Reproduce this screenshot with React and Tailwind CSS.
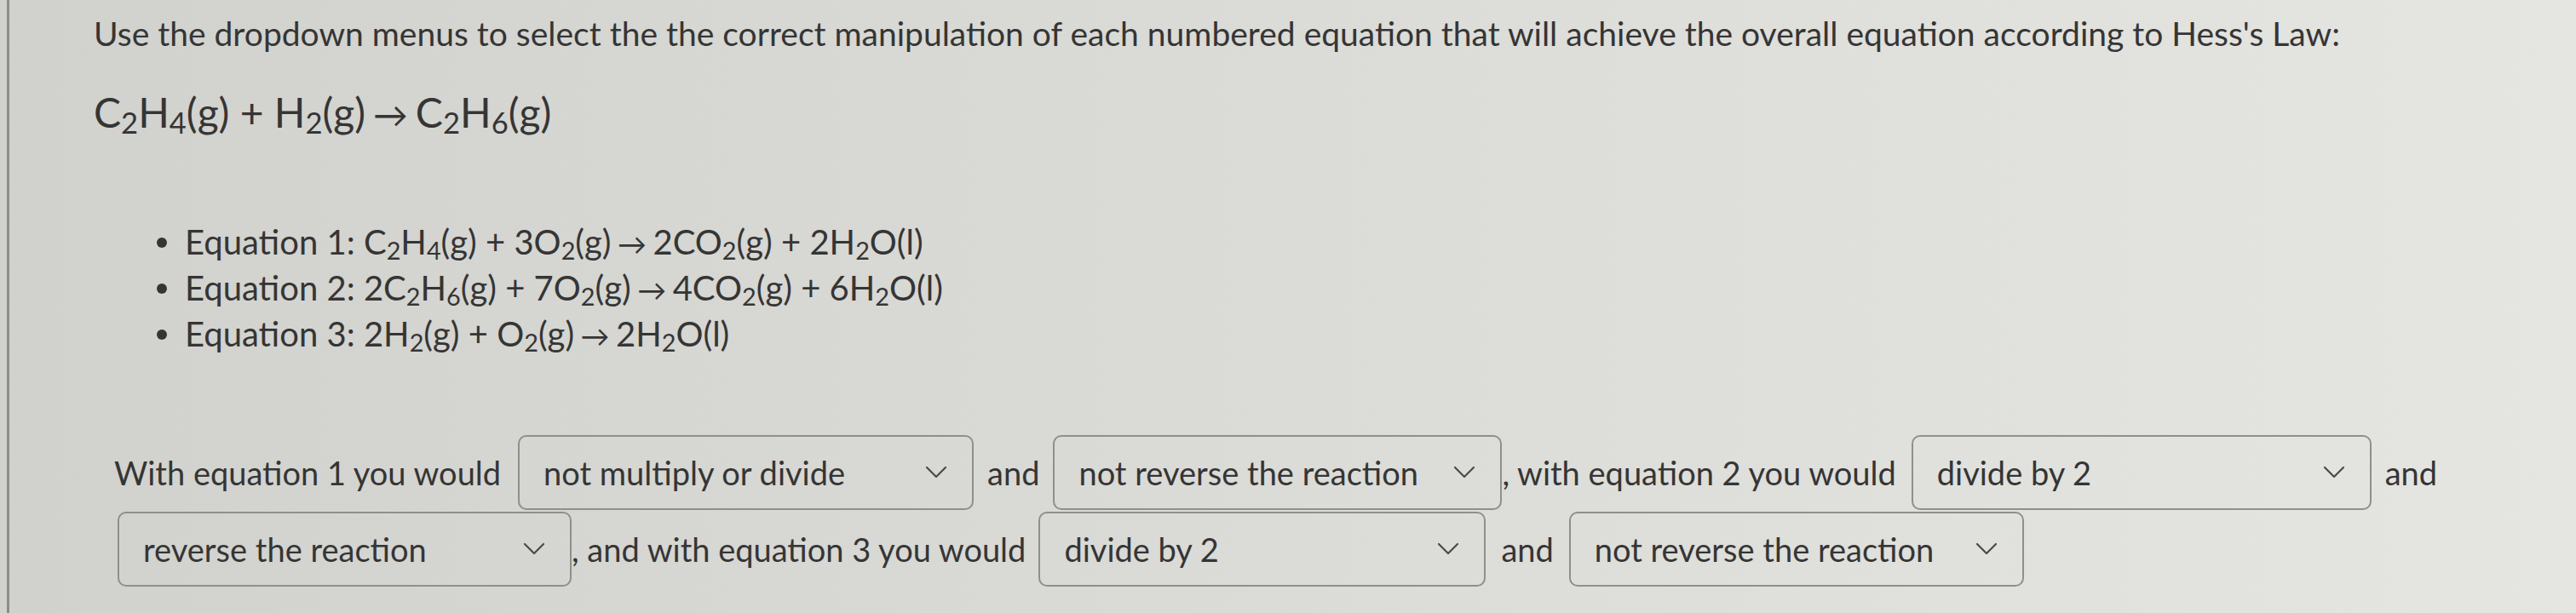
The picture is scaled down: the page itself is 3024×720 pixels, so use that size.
import React from "react";

function Sub({ children }) {
  return <sub className="text-[0.72em] relative top-[0.2em] leading-none align-baseline">{children}</sub>;
}

function Arrow() {
  return <span className="mx-[0.22em] text-[0.85em]">→</span>;
}

function Chevron() {
  return (
    <svg width="26" height="16" viewBox="0 0 26 16" fill="none" className="shrink-0">
      <path d="M2 2 L13 13 L24 2" stroke="#4a4a4a" strokeWidth="2.2" strokeLinecap="round" strokeLinejoin="round" />
    </svg>
  );
}

function Select({ label, w = "w-[533px]" }) {
  return (
    <div className={`${w} h-[88px] shrink-0 border-2 border-[#8f8f8c] rounded-[10px] flex items-center justify-between pl-[28px] pr-[29px]`}>
      <span>{label}</span>
      <Chevron />
    </div>
  );
}

export default function App() {
  return (
    <div className="w-[3024px] h-[720px] overflow-hidden bg-gradient-to-r from-[#d1d1cd] via-[#dbdbd7] to-[#e5e5e1] font-['Lato','Open_Sans',sans-serif] text-[#353535]">
      <div className="ml-[8px] h-full border-l-[3px] border-[#8c8c88]">
        <div className="pl-[99px] pt-[15px] text-[39px] leading-[48px] whitespace-nowrap">
          Use the dropdown menus to select the the correct manipulation of each numbered equation that will achieve the overall equation according to Hess's Law:
        </div>
        <div className="pl-[99px] mt-[41px] text-[48px] leading-[56px] whitespace-nowrap">
          C<Sub>2</Sub>H<Sub>4</Sub>(g) + H<Sub>2</Sub>(g)<Arrow />C<Sub>2</Sub>H<Sub>6</Sub>(g)
        </div>
        <div className="mt-[95px] pl-[173px] text-[40px] leading-[53px] flex flex-col whitespace-nowrap">
          <div className="flex items-center gap-[21px]">
            <span className="w-[12px] h-[12px] rounded-full bg-[#353535]" />
            <span>Equation 1: C<Sub>2</Sub>H<Sub>4</Sub>(g) + 3O<Sub>2</Sub>(g)<Arrow />2CO<Sub>2</Sub>(g) + 2H<Sub>2</Sub>O(l)</span>
          </div>
          <div className="flex items-center gap-[21px]">
            <span className="w-[12px] h-[12px] rounded-full bg-[#353535]" />
            <span>Equation 2: 2C<Sub>2</Sub>H<Sub>6</Sub>(g) + 7O<Sub>2</Sub>(g)<Arrow />4CO<Sub>2</Sub>(g) + 6H<Sub>2</Sub>O(l)</span>
          </div>
          <div className="flex items-center gap-[21px]">
            <span className="w-[12px] h-[12px] rounded-full bg-[#353535]" />
            <span>Equation 3: 2H<Sub>2</Sub>(g) + O<Sub>2</Sub>(g)<Arrow />2H<Sub>2</Sub>O(l)</span>
          </div>
        </div>
        <div className="mt-[91px] pl-[123px] text-[38px] leading-[46px] flex flex-col gap-[2px] whitespace-nowrap">
          <div className="flex items-center">
            <span className="mr-[20px]">With equation 1 you would</span>
            <Select label="not multiply or divide" w="w-[535px]" />
            <span className="mx-[16px]">and</span>
            <Select label="not reverse the reaction" w="w-[527px]" />
            <span className="mr-[18px]">, with equation 2 you would</span>
            <Select label="divide by 2" w="w-[540px]" />
            <span className="ml-[16px]">and</span>
          </div>
          <div className="flex items-center ml-[4px]">
            <Select label="reverse the reaction" />
            <span className="mr-[15px]">, and with equation 3 you would</span>
            <Select label="divide by 2" w="w-[525px]" />
            <span className="mx-[18px]">and</span>
            <Select label="not reverse the reaction" w="w-[534px]" />
          </div>
        </div>
      </div>
    </div>
  );
}
